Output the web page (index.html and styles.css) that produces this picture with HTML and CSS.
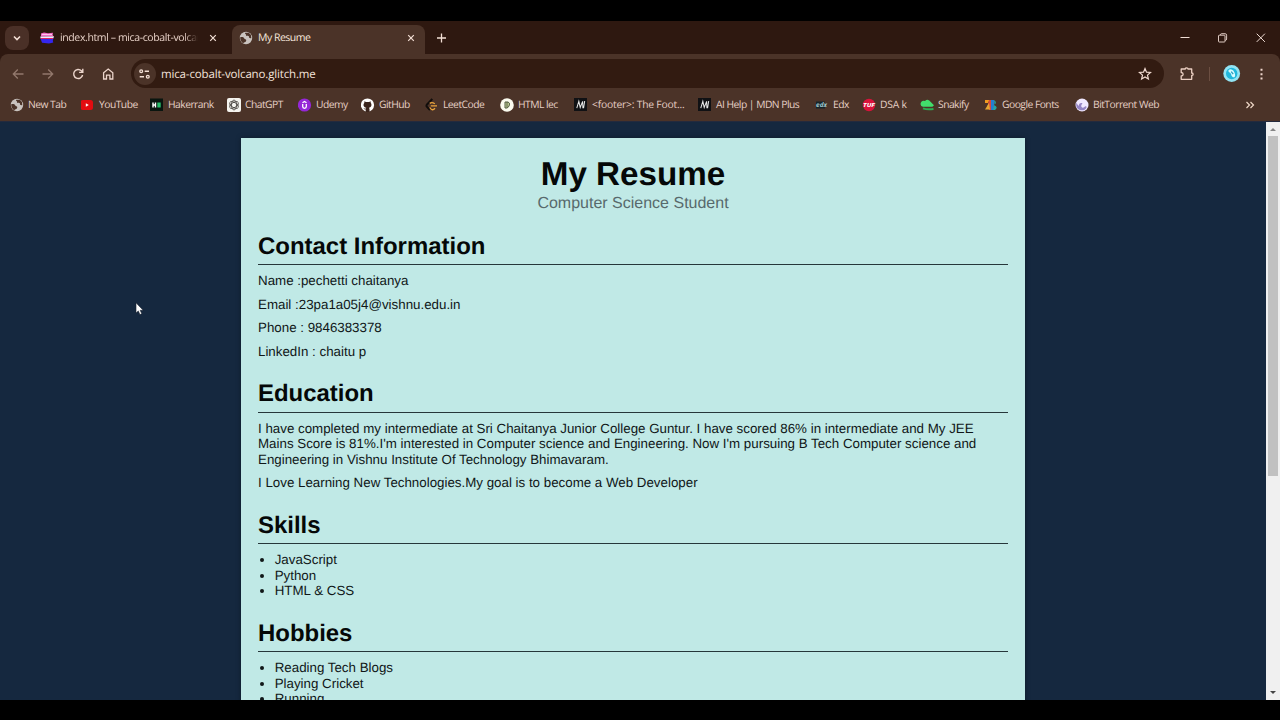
FILE: index.html
```html
<!DOCTYPE html>
<html lang="en">
<head>
<meta charset="utf-8">
<title>My Resume</title>
<link rel="stylesheet" href="styles.css">
</head>
<body>
<svg class="defs" width="0" height="0">
  <symbol id="globe" viewBox="0 0 14 14"><circle cx="7" cy="7" r="6.2" fill="#c9c3bf"/><path d="M1.2 6.2C3 5.8 4.7 6 5.2 7.3S7.6 8 7.2 9.8 4.8 11 4.4 12.3C2.6 11.4 1 9 1.2 6.2ZM6.2 1.7 9.8 1.8 12 4.1 12.3 7.3C10.5 7.6 9.7 6.7 10 5.6S7 5.6 7.2 4.2 5.4 3 6.2 1.7Z" fill="#4b3328"/></symbol>
  <symbol id="close" viewBox="0 0 10 10"><path d="M2.2 2.2 7.8 7.8M7.8 2.2 2.2 7.8" fill="none" stroke="#f3dfd5" stroke-width="1.2"/></symbol>
  <symbol id="mdn" viewBox="0 0 14 14"><path d="M0 0H14V14H0Z" fill="#101114"/><path d="M3 11 5.2 3.6 6.7 10.2 9.3 3.6 9.6 11M11.5 3.2 10.3 11" fill="none" stroke="#e8e8e8" stroke-width="1.1"/></symbol>
</svg>
<div class="screen">
  <header class="tabstrip">
    <button class="tab-search"><svg width="24" height="24" viewBox="0 0 24 24"><path d="M9 10.5 12 13.5 15 10.5" fill="none" stroke="#f3dfd5" stroke-width="1.6"/></svg></button>
    <div class="tab">
      <svg width="14" height="14" viewBox="0 0 14 14"><path d="M1 2.6 4 1.6 8 2.2 13 1.8 12.6 4 13.4 5.2 1 5.4Z" fill="#f06bc4"/><path d="M2 3.5H12" stroke="#ffc4ec"/><path d="M0.3 5.6 14 5.2 13.4 7.2.5 7.5Z" fill="#f4e6ff"/><path d="M.5 7.4 13.5 7.1 12.8 9.7 13.3 11.4 9 12.4 2 11.8Z" fill="#3426ee"/><path d="M1 7.5H13" stroke="#df235c"/></svg>
      <span class="tab-title faded">index.html – mica-cobalt-volcan</span>
      <svg class="tab-close" width="10" height="10"><use href="#close"/></svg>
    </div>
    <div class="tab active">
      <svg width="14" height="14"><use href="#globe"/></svg>
      <span class="tab-title resume-title">My Resume</span>
      <svg class="tab-close" width="10" height="10"><use href="#close"/></svg>
    </div>
    <svg class="new-tab" width="12" height="12" viewBox="0 0 12 12"><path d="M6.5 1.5V10.5M2 6H11" stroke="#f3dfd5" stroke-width="1.3"/></svg>
    <div class="window-controls">
      <svg width="12" height="12" viewBox="0 0 12 12"><path d="M1.5 5.5H10.5" stroke="#f0ddd5"/></svg>
      <svg width="12" height="12" viewBox="0 0 12 12"><path d="M1.5 3.9Q1.5 3.2 2.2 3.2H7.3Q8 3.2 8 3.9V9.3Q8 10 7.3 10H2.2Q1.5 10 1.5 9.3ZM3.5 3V2.6Q3.6 1.7 4.6 1.7H8.1Q9.6 1.7 9.6 3.2V7Q9.6 8.3 8.2 8.4" fill="none" stroke="#f0ddd5" stroke-width=".9"/></svg>
      <svg width="12" height="12" viewBox="0 0 12 12"><path d="M1.7 1.7 9.9 9.9M9.9 1.7 1.7 9.9" stroke="#f0ddd5"/></svg>
    </div>
  </header>
  <div class="toolbar-frame">
  <div class="toolbar">
    <nav class="nav-buttons">
      <svg width="14" height="14" viewBox="0 0 14 14"><path d="M12.5 7H2.5M6.8 2.5 2.3 7 6.8 11.5" fill="none" stroke="#92786c" stroke-width="1.3"/></svg>
      <svg width="14" height="14" viewBox="0 0 14 14"><path d="M1.5 7H11.5M7.2 2.5 11.7 7 7.2 11.5" fill="none" stroke="#92786c" stroke-width="1.3"/></svg>
      <svg width="14" height="14" viewBox="0 0 14 14"><path d="M11.6 8A4.5 4.5 0 1 1 10.4 3.8L11.6 5M11.8 1.8V5.4H8.1" fill="none" stroke="#ecd5cb" stroke-width="1.4"/></svg>
      <svg width="14" height="14" viewBox="0 0 14 14"><path d="M2.6 5.7 7.2 2 11.8 5.7V12H8.9V8.1H5.5V12H2.6Z" fill="none" stroke="#ecd5cb" stroke-width="1.3"/></svg>
    </nav>
    <div class="omnibox">
      <span class="site-info"><svg width="14" height="14" viewBox="0 0 14 14"><path d="M6.7 4.3H11M1.7 9.7H6" stroke="#f3dfd5" stroke-width="1.4"/><circle cx="3.2" cy="4.3" r="1.4" fill="none" stroke="#f3dfd5" stroke-width="1.3"/><circle cx="9.8" cy="9.7" r="1.4" fill="none" stroke="#f3dfd5" stroke-width="1.3"/></svg></span>
      <span class="url">mica-cobalt-volcano.glitch.me</span>
      <svg class="star" width="14" height="14" viewBox="0 0 14 14"><path d="M7 1.6 8.5 5.2 12.5 5.5 9.5 8.1 10.4 12 7 9.9 3.6 12 4.5 8.1 1.5 5.5 5.5 5.2Z" fill="none" stroke="#f0d9cf" stroke-width="1.2"/></svg>
    </div>
    <svg class="puzzle" width="16" height="16" viewBox="0 0 16 16"><path d="M2.2 3H6.3C6.3 1.4 9 1.4 9 3H12.7V7C14.6 7 14.6 9.4 12.7 9.4V13.3H2.2V10C4.8 9.7 4.8 6.7 2.2 6.5Z" fill="none" stroke="#ecd0c3" stroke-width="1.3" stroke-linejoin="round"/></svg>
    <span class="divider"></span>
    <svg class="avatar" width="18" height="18" viewBox="0 0 18 18"><circle cx="8.7" cy="8.5" r="8.4" fill="#92e4f4"/><circle cx="8.7" cy="8.5" r="5.7" fill="#20b7dc"/><path d="M5.7 5C7.2 3.5 10.2 4.7 11.2 6.9S12.7 10.9 11.4 12.2C9.7 12.5 8.5 11.2 8.2 9.4S4.4 7.2 5.7 5Z" fill="#d7fbff"/><path d="M8.2 6.7 10.2 9.2" stroke="#289dbe" stroke-width="1.3"/></svg>
    <svg class="menu" width="6" height="14" viewBox="0 0 6 14"><path d="M1.5 1.8H3.5V3.8H1.5ZM1.5 6.2H3.5V8.2H1.5ZM1.5 10.6H3.5V12.6H1.5Z" fill="#edd5cb"/></svg>
  </div>
  </div>
  <nav class="bookmarks">
    <a><svg width="14" height="14"><use href="#globe"/></svg><span>New Tab</span></a>
    <a><svg width="14" height="14" viewBox="0 0 14 14"><rect x="-.5" y="2" width="12.5" height="10" rx="2.5" fill="#e30c10"/><path d="M4.8 5.2V8.8L7.8 7Z" fill="#fff"/></svg><span>YouTube</span></a>
    <a><svg width="14" height="14" viewBox="0 0 14 14"><path d="M0 .5H13V13H0Z" fill="#09150f"/><path d="M3 4.5V9.5M5.5 4.5V9.5M3 7H5.5" stroke="#fff" stroke-width="1.4"/><path d="M7.3 4.5H10.7V9.5H7.3Z" fill="#27bd69"/></svg><span>Hakerrank</span></a>
    <a><svg width="14" height="14" viewBox="0 0 14 14"><rect width="14" height="14" rx="2" fill="#f5f4ef"/><g fill="none" stroke="#45403c" stroke-width=".8"><ellipse cx="7" cy="7" rx="2.5" ry="4.9"/><ellipse cx="7" cy="7" rx="2.5" ry="4.9" transform="rotate(60 7 7)"/><ellipse cx="7" cy="7" rx="2.5" ry="4.9" transform="rotate(120 7 7)"/></g></svg><span>ChatGPT</span></a>
    <a><svg width="14" height="14" viewBox="0 0 14 14"><circle cx="6.5" cy="7" r="6.6" fill="#9527d8"/><path d="M4.7 6V8.6Q4.7 10.3 6.5 10.3T8.3 8.6V6M4.5 4.8 6.5 3.5 8.5 4.8" fill="none" stroke="#fff" stroke-width="1.3"/></svg><span>Udemy</span></a>
    <a><svg width="14" height="14" viewBox="0 0 14 14"><circle cx="6.5" cy="7" r="6.6" fill="#fff"/><path d="M4.7 14V11.3C3.3 11.7 3 10.5 2.3 10.2 3.2 9.9 3.7 11 4.8 10.5L5.3 9.7C2.2 9.3 2 6.2 3.3 5L3.4 3.2 5 4H8.1L9.6 3.2 9.8 5C11 6.4 10.7 9.3 7.9 9.7Q8.5 10.3 8.5 11.3V14Z" fill="#3b251d"/></svg><span>GitHub</span></a>
    <a><svg width="14" height="14" viewBox="0 0 14 14"><path d="M7.3 1 2 6.5Q1 7.7 2 8.8L5 12" fill="none" stroke="#110d0b" stroke-width="2"/><path d="M4.8 5.4Q6.8 3.7 9.8 5.8M4.8 9.5Q7.2 13.7 10 10.3M5.8 7.9H12" fill="none" stroke="#e9a43c" stroke-width="1.4"/></svg><span>LeetCode</span></a>
    <a><svg width="14" height="14" viewBox="0 0 14 14"><circle cx="7" cy="7" r="6.8" fill="#fbfbef"/><path d="M5 4H8Q10 4.6 9.4 7T7 10H5ZM7 4V9.5" fill="#c9d7a0" stroke="#4f593d"/></svg><span>HTML lec</span></a>
    <a><svg width="14" height="13"><use href="#mdn" width="13" height="13"/></svg><span class="wide">&lt;footer&gt;: The Foot...</span></a>
    <a><svg width="14" height="13"><use href="#mdn" width="13" height="13"/></svg><span>AI Help | MDN Plus</span></a>
    <a><svg width="14" height="14" viewBox="0 0 14 14"><path d="M1 3.5H10V10.5H1Z" fill="#17252a"/><text x="1" y="9" font-size="6.5" font-weight="700" font-style="italic" fill="#a4cbd1" textLength="11" lengthAdjust="spacingAndGlyphs">edx</text></svg><span>Edx</span></a>
    <a><svg width="14" height="14" viewBox="0 0 14 14"><circle cx="7" cy="7" r="6.2" fill="#da123b"/><text x="1" y="9" font-size="5.5" font-weight="700" font-style="italic" fill="#fff" textLength="12" lengthAdjust="spacingAndGlyphs">TUF</text></svg><span class="wide">DSA k</span></a>
    <a><svg width="14" height="14" viewBox="0 0 14 14"><path d="M.5 6Q1.5 1.7 5 3 8-.1 11 4.2L14 7.2 12.4 8.8H3Q.7 8.5.5 6Z" fill="#42dd6c"/><path d="M3 10.3Q7 12 13.5 11" fill="none" stroke="#2cad52" stroke-width="2"/></svg><span>Snakify</span></a>
    <a><svg width="14" height="14" viewBox="0 0 14 14"><path d="M1 2H5.5L4 5H1Z" fill="#f09b20"/><path d="M5 2H7V12H5L3.5 8Z" fill="#d9483c"/><path d="M1 11.5 5 5 6 11.5Z" fill="#e6a632"/><path d="M7 2H10V12H7Z" fill="#247ed0"/><path d="M10 2Q13.5 4 10.5 6.8ZM10 7Q14.8 9 11 12H9Z" fill="#25a5a1"/></svg><span>Google Fonts</span></a>
    <a><svg width="14" height="14" viewBox="0 0 14 14"><circle cx="7" cy="7" r="6.5" fill="#f0e8ff"/><path d="M1.5 4.5C0 10 4 13 8.5 12.2 12.3 10.7 12 7.7 10.3 8.3 8.4 10.7 5.7 9.7 6.3 7.3L7.5 5Q3.5 4.5 4 8 2.1 6.7 1.5 4.5Z" fill="#9484c4"/></svg><span>BitTorrent Web</span></a>
    <svg class="more" width="10" height="10" viewBox="0 0 10 10"><path d="M1.5 2 4.5 5 1.5 8M5.5 2 8.5 5 5.5 8" fill="none" stroke="#f0d8c8" stroke-width="1.2"/></svg>
  </nav>
  <div class="viewport">
    <div class="page">
      <main class="resume">
        <h1>My Resume</h1>
        <p class="subtitle">Computer Science Student</p>
        <section><h2>Contact Information</h2>
          <p>Name :pechetti chaitanya</p><p>Email :23pa1a05j4@vishnu.edu.in</p><p>Phone : 9846383378</p><p>LinkedIn : chaitu p</p>
        </section>
        <section><h2>Education</h2>
          <p>I have completed my intermediate at Sri Chaitanya Junior College Guntur. I have scored 86% in intermediate and My JEE<br>Mains Score is 81%.I'm interested in Computer science and Engineering. Now I'm pursuing B Tech Computer science and<br>Engineering in Vishnu Institute Of Technology Bhimavaram.</p>
          <p>I Love Learning New Technologies.My goal is to become a Web Developer</p>
        </section>
        <section><h2>Skills</h2><ul><li>JavaScript</li><li>Python</li><li>HTML &amp; CSS</li></ul></section>
        <section><h2>Hobbies</h2><ul><li>Reading Tech Blogs</li><li>Playing Cricket</li><li>Running</li></ul></section>
      </main>
    </div>
    <div class="scrollbar">
      <svg width="14" height="14" viewBox="0 0 14 14"><path d="M4 9 7 6 10 9Z" fill="#858585"/></svg>
      <div class="thumb"></div>
      <svg width="14" height="14" viewBox="0 0 14 14"><path d="M4 5 7 8 10 5Z" fill="#444"/></svg>
    </div>
  </div>
  <svg class="cursor" width="10" height="14" viewBox="0 0 10 14"><path d="M1 .8V11L3.3 8.9 4.9 12.6 6.8 11.8 5.2 8.3H8.2Z" fill="#fff" stroke="#17202e" stroke-width=".6"/></svg>
</div>
</body>
</html>
```
FILE: styles.css
```css
* { box-sizing: border-box; }
body { margin: 0; background: #000; }
.defs { position: absolute; }
.screen {
  width: 1280px; height: 720px; padding: 21px 0 20px;
  display: flex; flex-direction: column; position: relative; overflow: hidden;
  background: #000; font-family: "Open Sans", "Noto Sans", sans-serif; color: #e6d0c6;
  text-rendering: geometricPrecision;
}
svg { display: block; flex: none; }

.tabstrip { height: 33px; flex: none; display: flex; align-items: center; background: #2e1810; padding-left: 5px; }
.tab-search { width: 24px; height: 24px; border: 0; padding: 0; border-radius: 8px; background: #4a3027; }
.tab { display: flex; align-items: center; width: 203px; height: 28px; padding-left: 11px; font-size: 10.5px; }
.tab.active {
  width: 193px; height: 29px; align-self: flex-end; padding: 0 0 4px 7px;
  border-radius: 8px 8px 0 0; background: #4b3328; color: #f7e8df;
}
.tab-title { margin-left: 6px; padding-top: 1px; white-space: nowrap; width: 138px; letter-spacing: -0.38px; }
.resume-title { width: 148px; letter-spacing: -0.5px; }
.active .tab-title { margin-left: 5px; }
.faded { overflow: hidden; -webkit-mask-image: linear-gradient(90deg, #000 90%, transparent); mask-image: linear-gradient(90deg, #000 90%, transparent); }
.tab-close { margin-left: 10px; }
.active .tab-close { margin-left: 0; }
.new-tab { margin-left: 10px; }
.window-controls { margin-left: auto; margin-right: 13px; display: flex; gap: 26px; }

.toolbar-frame { flex: none; background: #2e1810; }
.toolbar { height: 38px; display: flex; align-items: center; background: #4b3328; border-radius: 8px 8px 0 0; padding: 1px 15px 0 11px; }
.nav-buttons { display: flex; gap: 16px; }
.omnibox { width: 1033px; height: 29px; margin-left: 16px; margin-right: 15px; display: flex; align-items: center; border-radius: 15px; background: #321b11; padding-left: 3px; }
.site-info { width: 22px; height: 22px; border-radius: 11px; background: #4b3328; display: grid; place-items: center; }
.url { margin-left: 5px; padding-top: 2px; font-size: 11.5px; letter-spacing: -0.15px; color: #f3e2da; }
.star { margin-left: auto; margin-right: 12px; }
.divider { width: 1px; height: 14px; margin: 0 13px 0 14px; background: #6c4f42; }
.menu { margin-left: 18px; }

.bookmarks {
  height: 29px; flex: none; display: grid; align-items: center; padding: 0 25px 4px 10px;
  grid-template-columns: 71px 69px 77px 71px 63px 64px 75px 74px 124px 117px 47px 58px 64px 91px 140px auto;
  background: #4b3328; font-size: 10.3px; line-height: 14px; letter-spacing: -0.52px;
}
.bookmarks a { display: flex; align-items: center; white-space: nowrap; gap: 4px; }
.bookmarks text { letter-spacing: 0; }
.bookmarks .wide { letter-spacing: -0.2px; }
.more { justify-self: end; }

.viewport { flex: 1; min-height: 0; display: flex; background: #15283f; border-top: 1px solid #242a3d; }
.page { flex: 1; overflow: hidden; padding-top: 16px; display: flex; justify-content: center; align-items: flex-start; }
.resume {
  width: 784px; height: 640px; padding: 18px 17px 0;
  background: #c0e9e6; color: #101718; box-shadow: 0 0 5px rgba(0, 0, 0, .35);
  font-family: "Liberation Sans", Arial, sans-serif; font-size: 13.33px; line-height: 15.4px;
}
h1, h2, p, ul { margin: 0; }
h1 { font-size: 33.2px; line-height: 38px; text-align: center; color: #050808; }
.subtitle { font-size: 16px; line-height: 18px; text-align: center; color: #586a6c; margin-top: 1px; }
section { padding-top: 19.7px; }
h2 { font-size: 23.95px; line-height: 28px; padding-bottom: 3.4px; margin-bottom: 8.2px; border-bottom: 1px solid #26373a; color: #050808; }
section p + p { margin-top: 8.2px; }
section > :last-child { margin-bottom: 1.3px; }
ul { padding-left: 16.7px; }

.scrollbar { width: 14px; display: flex; flex-direction: column; background: #f0f0f0; }
.thumb { width: 10px; height: 340px; margin: 0 auto auto 2px; background: #c1c1c1; }
.cursor { position: absolute; left: 135px; top: 302px; }
```
